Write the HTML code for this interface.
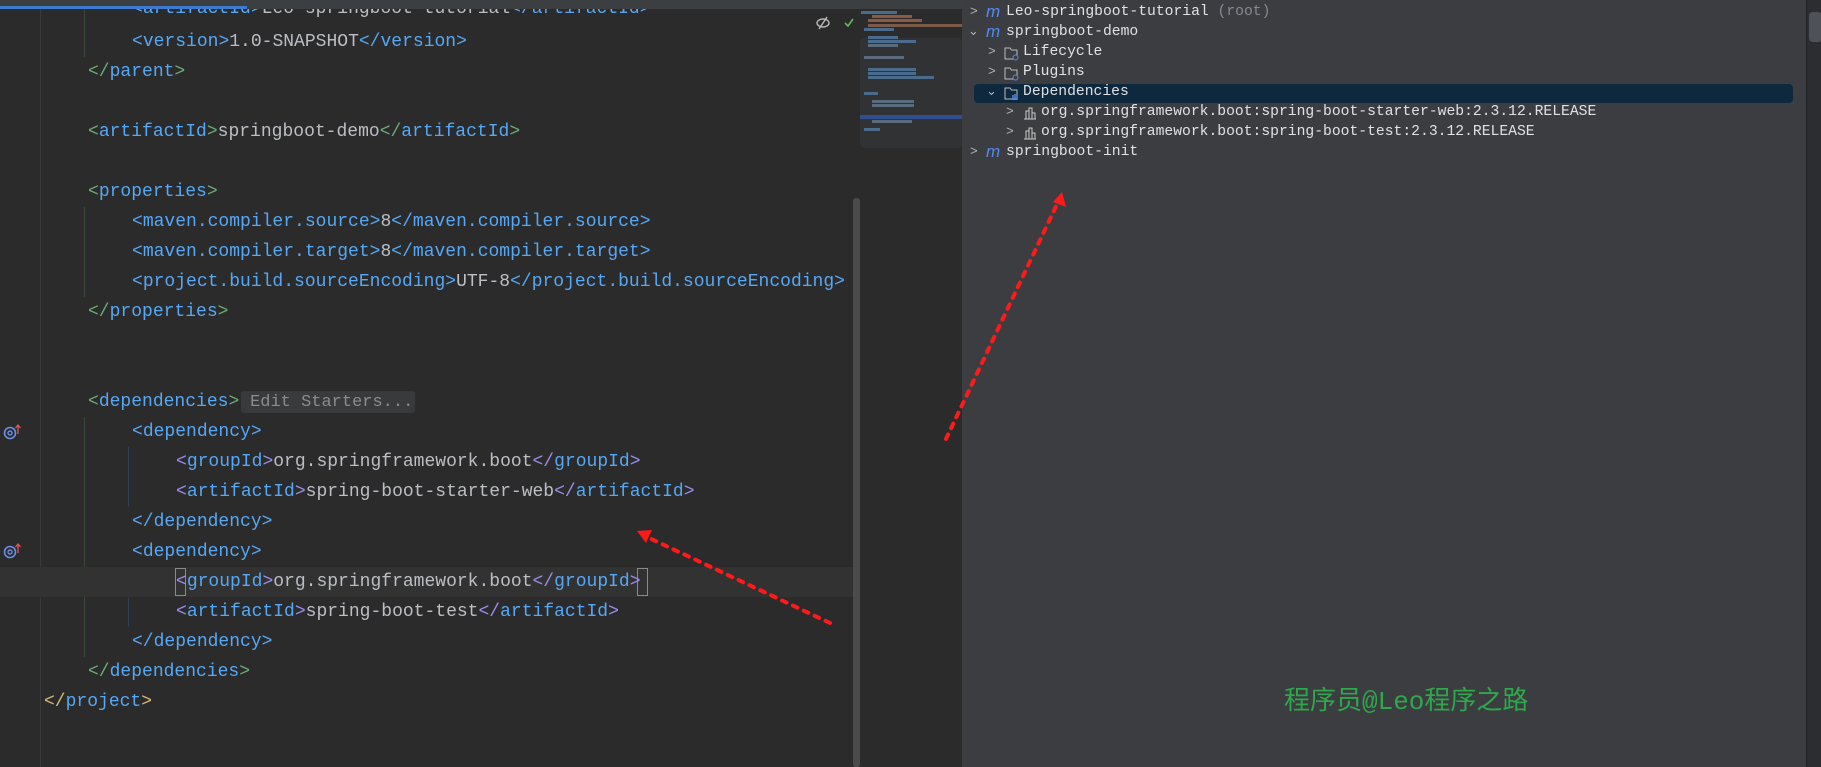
<!DOCTYPE html>
<html><head><meta charset="utf-8"><style>
*{margin:0;padding:0;box-sizing:border-box}
body{width:1821px;height:767px;overflow:hidden;background:#2b2b2c;position:relative;font-family:"Liberation Mono",monospace}
.ed{position:absolute;left:0;top:0;width:962px;height:767px;background:#2b2b2c;overflow:hidden}
.l{position:absolute;height:30px;line-height:30px;font-size:18px;color:#bcbec4;white-space:pre}
.n{color:#56a8f5}.y{color:#d5b778}.g{color:#6aab73}.b{color:#56a8f5}.p{color:#9a8de8}
.gl{position:absolute;width:1px;background:#3a4a3a}
.panel{position:absolute;left:962px;top:0;width:844px;height:767px;background:#3b3d41}
.tb{position:absolute;left:1806px;top:0;width:15px;height:767px;background:#2b2d30;border-left:1px solid #1e1f22}
.r{position:absolute;height:20px;line-height:20px;font-size:14.7px;color:#dfe1e5;white-space:pre}
.chev{position:absolute;font-size:13px;color:#b0b3b8;line-height:20px;height:20px}
.m{position:absolute;font-family:"Liberation Sans",sans-serif;font-style:italic;color:#548af7;font-size:17px;line-height:20px}
.mm{position:absolute;height:3px}
</style></head><body>
<div class="ed">
 <div style="position:absolute;left:0;top:0;width:962px;height:9px;background:#3c3f41"></div>
 <div style="position:absolute;left:0;top:6px;width:247px;height:3px;background:#3d7bd0"></div>
 <div style="position:absolute;left:40px;top:9px;width:1px;height:758px;background:#393939"></div>
 <div class="gl" style="left:84px;top:9px;height:48px"></div>
 <div class="gl" style="left:84px;top:207px;height:90px"></div>
 <div class="gl" style="left:84px;top:417px;height:240px"></div>
 <div class="gl" style="left:128px;top:447px;height:60px;background:#2f4055"></div>
 <div class="gl" style="left:128px;top:567px;height:60px;background:#2f4055"></div>
 <div style="position:absolute;left:0;top:567px;width:860px;height:30px;background:#323233"></div>
 <div style="position:absolute;left:853px;top:198px;width:7px;height:569px;background:#4b4b4c;border-radius:3px"></div>
 <div class="l" style="left:132px;top:-6px"><span class="b">&lt;</span><span class="n">artifactId</span><span class="b">&gt;</span>Leo-springboot-tutorial<span class="b">&lt;/</span><span class="n">artifactId</span><span class="b">&gt;</span></div>
 <div style="position:absolute;left:0;top:0;width:962px;height:9px;background:#3c3f41"></div>
 <div style="position:absolute;left:0;top:6px;width:247px;height:3px;background:#3d7bd0"></div>
 <div class="l" style="left:132px;top:27px"><span class="b">&lt;</span><span class="n">version</span><span class="b">&gt;</span>1.0-SNAPSHOT<span class="b">&lt;/</span><span class="n">version</span><span class="b">&gt;</span></div>
 <div class="l" style="left:88px;top:57px"><span class="g">&lt;/</span><span class="n">parent</span><span class="g">&gt;</span></div>
 <div class="l" style="left:88px;top:117px"><span class="g">&lt;</span><span class="n">artifactId</span><span class="g">&gt;</span>springboot-demo<span class="g">&lt;/</span><span class="n">artifactId</span><span class="g">&gt;</span></div>
 <div class="l" style="left:88px;top:177px"><span class="g">&lt;</span><span class="n">properties</span><span class="g">&gt;</span></div>
 <div class="l" style="left:132px;top:207px"><span class="b">&lt;</span><span class="n">maven.compiler.source</span><span class="b">&gt;</span>8<span class="b">&lt;/</span><span class="n">maven.compiler.source</span><span class="b">&gt;</span></div>
 <div class="l" style="left:132px;top:237px"><span class="b">&lt;</span><span class="n">maven.compiler.target</span><span class="b">&gt;</span>8<span class="b">&lt;/</span><span class="n">maven.compiler.target</span><span class="b">&gt;</span></div>
 <div class="l" style="left:132px;top:267px"><span class="b">&lt;</span><span class="n">project.build.sourceEncoding</span><span class="b">&gt;</span>UTF-8<span class="b">&lt;/</span><span class="n">project.build.sourceEncoding</span><span class="b">&gt;</span></div>
 <div class="l" style="left:88px;top:297px"><span class="g">&lt;/</span><span class="n">properties</span><span class="g">&gt;</span></div>
 <div style="position:absolute;left:241px;top:391px;width:174px;height:22px;background:#393a3b;border-radius:3px"></div>
 <div class="l" style="left:88px;top:387px"><span class="g">&lt;</span><span class="n">dependencies</span><span class="g">&gt;</span> <span style="color:#8c8c8c;font-size:17px">Edit Starters...</span></div>
 <div class="l" style="left:132px;top:417px"><span class="b">&lt;</span><span class="n">dependency</span><span class="b">&gt;</span></div>
 <div class="l" style="left:176px;top:447px"><span class="p">&lt;</span><span class="n">groupId</span><span class="p">&gt;</span>org.springframework.boot<span class="p">&lt;/</span><span class="n">groupId</span><span class="p">&gt;</span></div>
 <div class="l" style="left:176px;top:477px"><span class="p">&lt;</span><span class="n">artifactId</span><span class="p">&gt;</span>spring-boot-starter-web<span class="p">&lt;/</span><span class="n">artifactId</span><span class="p">&gt;</span></div>
 <div class="l" style="left:132px;top:507px"><span class="b">&lt;/</span><span class="n">dependency</span><span class="b">&gt;</span></div>
 <div class="l" style="left:132px;top:537px"><span class="b">&lt;</span><span class="n">dependency</span><span class="b">&gt;</span></div>
 <div style="position:absolute;left:175px;top:568px;width:11px;height:28px;border:1px solid #8a8a8a"></div>
 <div style="position:absolute;left:637px;top:568px;width:11px;height:28px;border:1px solid #8a8a8a"></div>
 <div class="l" style="left:176px;top:567px"><span class="p">&lt;</span><span class="n">groupId</span><span class="p">&gt;</span>org.springframework.boot<span class="p">&lt;/</span><span class="n">groupId</span><span class="p">&gt;</span></div>
 <div class="l" style="left:176px;top:597px"><span class="p">&lt;</span><span class="n">artifactId</span><span class="p">&gt;</span>spring-boot-test<span class="p">&lt;/</span><span class="n">artifactId</span><span class="p">&gt;</span></div>
 <div class="l" style="left:132px;top:627px"><span class="b">&lt;/</span><span class="n">dependency</span><span class="b">&gt;</span></div>
 <div class="l" style="left:88px;top:657px"><span class="g">&lt;/</span><span class="n">dependencies</span><span class="g">&gt;</span></div>
 <div class="l" style="left:44px;top:687px"><span class="y">&lt;/</span><span class="n">project</span><span class="y">&gt;</span></div>
 <svg style="position:absolute;left:2px;top:422px" width="20" height="18"><circle cx="8" cy="11" r="5.5" fill="none" stroke="#6b8fe8" stroke-width="1.6"/><circle cx="8" cy="11" r="2" fill="none" stroke="#6b8fe8" stroke-width="1.4"/><path d="M16 12V3M13.5 6L16 3L18.5 6" stroke="#e05555" fill="none" stroke-width="1.3"/></svg>
 <svg style="position:absolute;left:2px;top:541px" width="20" height="18"><circle cx="8" cy="11" r="5.5" fill="none" stroke="#6b8fe8" stroke-width="1.6"/><circle cx="8" cy="11" r="2" fill="none" stroke="#6b8fe8" stroke-width="1.4"/><path d="M16 12V3M13.5 6L16 3L18.5 6" stroke="#e05555" fill="none" stroke-width="1.3"/></svg>
 <svg style="position:absolute;left:815px;top:15px" width="40" height="16"><ellipse cx="8" cy="8" rx="6" ry="4" fill="none" stroke="#bbb" stroke-width="1.4"/><path d="M4 14L12 2" stroke="#bbb" stroke-width="1.4"/><path d="M30 8L33 11L38 4" stroke="#5fb865" fill="none" stroke-width="1.6"/></svg>
 <div style="position:absolute;left:860px;top:38px;width:102px;height:110px;background:#313233;border-radius:4px"></div>
 <div class="mm" style="left:861px;top:11px;width:36px;background:#4a6b8c"></div>
 <div class="mm" style="left:872px;top:15px;width:40px;background:#8a5a44"></div>
 <div class="mm" style="left:868px;top:19px;width:54px;background:#8a5a44"></div>
 <div class="mm" style="left:868px;top:24px;width:94px;background:#7b5a4a"></div>
 <div class="mm" style="left:864px;top:28px;width:30px;background:#4a6b8c"></div>
 <div class="mm" style="left:868px;top:36px;width:30px;background:#4a6b8c"></div>
 <div class="mm" style="left:868px;top:40px;width:48px;background:#4a6b8c"></div>
 <div class="mm" style="left:868px;top:44px;width:30px;background:#5a6b7c"></div>
 <div class="mm" style="left:864px;top:56px;width:40px;background:#5a6b7c"></div>
 <div class="mm" style="left:868px;top:68px;width:48px;background:#4a6b8c"></div>
 <div class="mm" style="left:868px;top:72px;width:48px;background:#4a6b8c"></div>
 <div class="mm" style="left:868px;top:76px;width:66px;background:#4a6b8c"></div>
 <div class="mm" style="left:864px;top:92px;width:14px;background:#4a6b8c"></div>
 <div class="mm" style="left:872px;top:100px;width:42px;background:#5a6b7c"></div>
 <div class="mm" style="left:872px;top:104px;width:42px;background:#5a6b7c"></div>
 <div class="mm" style="left:860px;top:115px;width:102px;height:4px;background:#2f4f8f"></div>
 <div class="mm" style="left:872px;top:120px;width:40px;background:#5a6b7c"></div>
 <div class="mm" style="left:864px;top:128px;width:16px;background:#4a6b8c"></div>
</div>
<div class="panel">
 <div style="position:absolute;left:12px;top:84px;width:819px;height:19px;background:#0e293e;border-radius:4px"></div>
</div>
<div class="tb"><div style="position:absolute;left:2px;top:12px;width:13px;height:30px;background:#4e5157;border-radius:4px"></div></div>
<div class="chev" style="left:970px;top:2px">&gt;</div><div class="m" style="left:986px;top:2px">m</div><div class="r" style="left:1006px;top:2px">Leo-springboot-tutorial <span style="color:#868a91">(root)</span></div>
<div class="chev" style="left:968px;top:22px">&#8964;</div><div class="m" style="left:986px;top:22px">m</div><div class="r" style="left:1006px;top:22px">springboot-demo</div>
<div class="chev" style="left:988px;top:42px">&gt;</div><svg style="position:absolute;left:1004px;top:46px" width="16" height="16"><path d="M1 2h5l1.5 2H13v9H1z" fill="none" stroke="#bbb"/><circle cx="11.5" cy="11.5" r="2.5" fill="#3b3d41" stroke="#548af7"/></svg><div class="r" style="left:1023px;top:42px">Lifecycle</div>
<div class="chev" style="left:988px;top:62px">&gt;</div><svg style="position:absolute;left:1004px;top:66px" width="16" height="16"><path d="M1 2h5l1.5 2H13v9H1z" fill="none" stroke="#bbb"/><circle cx="11.5" cy="11.5" r="2.5" fill="#3b3d41" stroke="#548af7"/></svg><div class="r" style="left:1023px;top:62px">Plugins</div>
<div class="chev" style="left:986px;top:82px">&#8964;</div><svg style="position:absolute;left:1004px;top:86px" width="16" height="16"><path d="M1 2h5l1.5 2H13v9H1z" fill="none" stroke="#bbb"/><path d="M9 9v5M11 8v6M13 10v4" stroke="#548af7" stroke-width="1.4"/></svg><div class="r" style="left:1023px;top:82px">Dependencies</div>
<div class="chev" style="left:1006px;top:102px">&gt;</div><svg style="position:absolute;left:1023px;top:106px" width="14" height="14"><path d="M1 13h12M3 13V5h3v8M6 13V2h3v11M9 13V7h3v6" fill="none" stroke="#ccc"/></svg><div class="r" style="left:1041px;top:102px">org.springframework.boot:spring-boot-starter-web:2.3.12.RELEASE</div>
<div class="chev" style="left:1006px;top:122px">&gt;</div><svg style="position:absolute;left:1023px;top:126px" width="14" height="14"><path d="M1 13h12M3 13V5h3v8M6 13V2h3v11M9 13V7h3v6" fill="none" stroke="#ccc"/></svg><div class="r" style="left:1041px;top:122px">org.springframework.boot:spring-boot-test:2.3.12.RELEASE</div>
<div class="chev" style="left:970px;top:142px">&gt;</div><div class="m" style="left:986px;top:142px">m</div><div class="r" style="left:1006px;top:142px">springboot-init</div>
<svg style="position:absolute;left:0;top:0" width="1821" height="767">
 <line x1="830" y1="623" x2="645" y2="536" stroke="#ff1a1a" stroke-width="4" stroke-dasharray="5,7" stroke-linecap="round"/>
 <path d="M637 531L652 530L646 543Z" fill="#ff1a1a"/>
 <line x1="946" y1="439" x2="1059" y2="200" stroke="#ff1a1a" stroke-width="4" stroke-dasharray="5,7" stroke-linecap="round"/>
 <path d="M1062 192L1066 207L1053 202Z" fill="#ff1a1a"/>
</svg>
<div style="position:absolute;left:1284px;top:680px;font-family:'Liberation Mono','Noto Sans CJK SC',sans-serif;font-size:26px;color:#2ea84a;white-space:nowrap">程序员@Leo程序之路</div>
</body></html>
